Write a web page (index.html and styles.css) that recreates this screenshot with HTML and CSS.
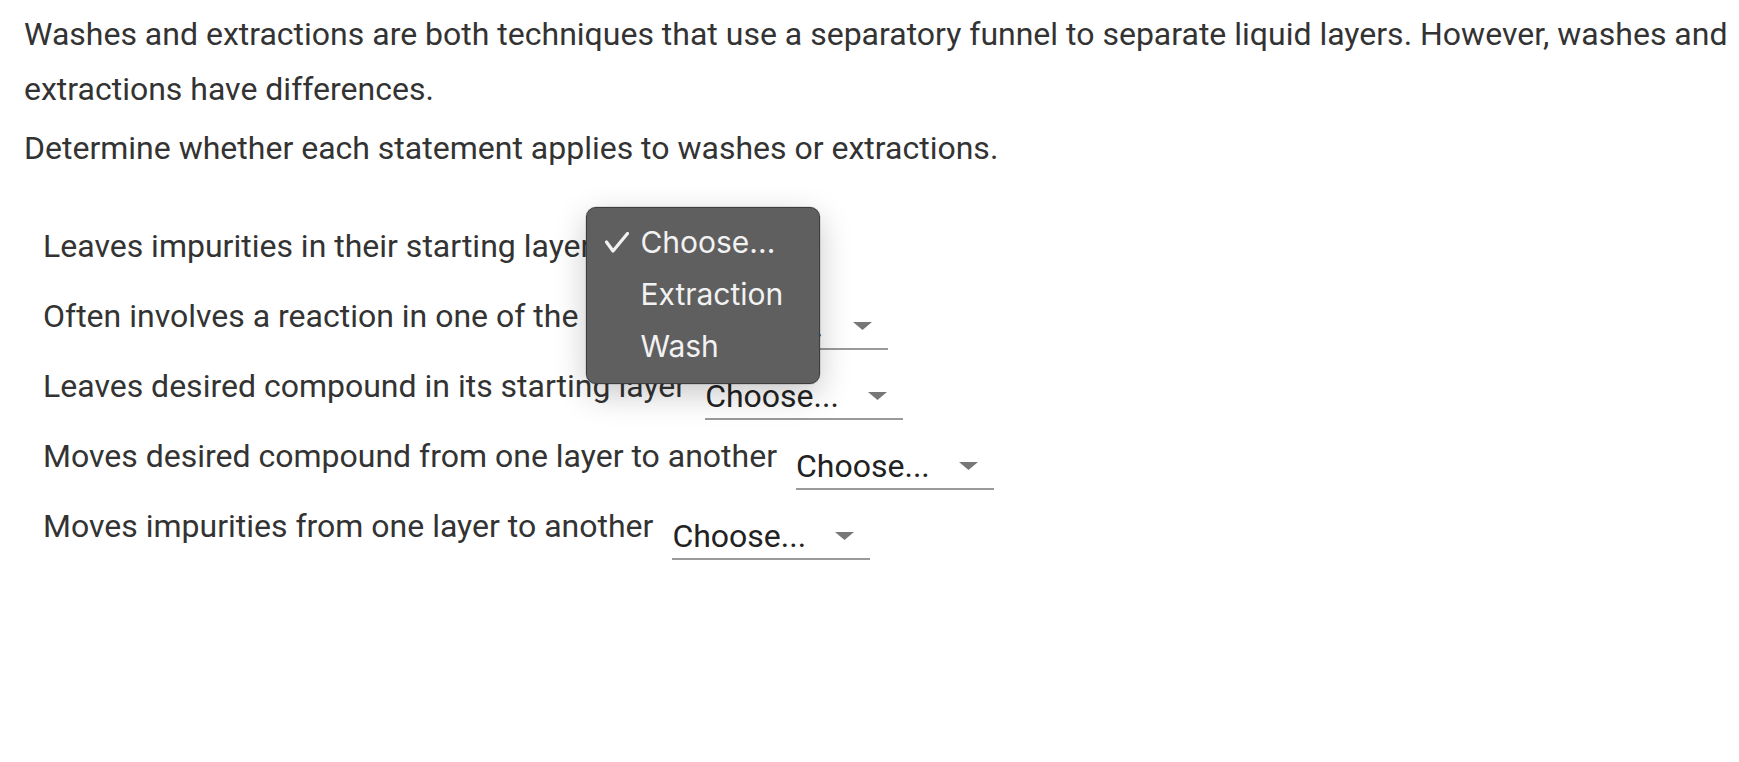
FILE: index.html
```html
<!DOCTYPE html>
<html lang="en">
<head>
<meta charset="utf-8">
<title>Washes and extractions</title>
<link rel="stylesheet" href="styles.css">
</head>
<body>
<div class="page">
  <p class="intro">Washes and extractions are both techniques that use a separatory funnel to separate liquid layers. However, washes and extractions have differences.</p>
  <p class="intro second">Determine whether each statement applies to washes or extractions.</p>
  <div class="rows">
    <div class="row">
      <span class="label">Leaves impurities in their starting layer</span>
      <div class="select open">
        <span class="value">Choose...</span>
        <svg class="caret" width="19" height="8" viewBox="0 0 19 8"><polygon points="0,0 19,0 9.5,8" fill="#777"/></svg>
        <div class="menu">
          <div class="item checked"><svg class="check" width="24" height="21" viewBox="0 0 24 21"><polyline points="1.5,10 8,19 22.5,1.5" fill="none" stroke="#f2f2f2" stroke-width="3.2" stroke-linecap="round" stroke-linejoin="round"/></svg><span>Choose...</span></div>
          <div class="item"><span>Extraction</span></div>
          <div class="item"><span>Wash</span></div>
        </div>
      </div>
    </div>
    <div class="row">
      <span class="label">Often involves a reaction in one of the layers</span>
      <div class="select">
        <span class="value">Choose...</span>
        <svg class="caret" width="19" height="8" viewBox="0 0 19 8"><polygon points="0,0 19,0 9.5,8" fill="#777"/></svg>
      </div>
    </div>
    <div class="row">
      <span class="label">Leaves desired compound in its starting layer</span>
      <div class="select">
        <span class="value">Choose...</span>
        <svg class="caret" width="19" height="8" viewBox="0 0 19 8"><polygon points="0,0 19,0 9.5,8" fill="#777"/></svg>
      </div>
    </div>
    <div class="row">
      <span class="label">Moves desired compound from one layer to another</span>
      <div class="select">
        <span class="value">Choose...</span>
        <svg class="caret" width="19" height="8" viewBox="0 0 19 8"><polygon points="0,0 19,0 9.5,8" fill="#777"/></svg>
      </div>
    </div>
    <div class="row">
      <span class="label">Moves impurities from one layer to another</span>
      <div class="select">
        <span class="value">Choose...</span>
        <svg class="caret" width="19" height="8" viewBox="0 0 19 8"><polygon points="0,0 19,0 9.5,8" fill="#777"/></svg>
      </div>
    </div>
  </div>
</div>
</body>
</html>
```

FILE: styles.css
```css
html, body {
  background: #ffffff;
}
body {
  margin: 0;
  font-family: Roboto, "Liberation Sans", sans-serif;
  color: #333333;
}
.page {
  padding: 7px 8px 0 24px;
}
.intro {
  margin: 0;
  font-size: 32px;
  line-height: 55px;
}
.intro.second {
  margin-top: 4px;
}
.rows {
  margin-top: 50px;
  padding-left: 19px;
  display: flex;
  flex-direction: column;
}
.row {
  display: flex;
  align-items: flex-start;
  height: 70px;
}
.label {
  font-size: 32px;
  line-height: 40px;
  white-space: nowrap;
}
.select {
  position: relative;
  margin-left: 19px;
  margin-top: 9px;
  display: flex;
  align-items: flex-start;
  width: 198px;
  height: 43px;
  border-bottom: 2px solid #9a9a9a;
  box-sizing: content-box;
}
.value {
  font-size: 32px;
  line-height: 40px;
  color: #222222;
  flex: 1;
  margin-top: 1px;
}
.caret {
  margin-right: 16px;
  margin-top: 17px;
}
.menu {
  position: absolute;
  left: -24px;
  top: -28px;
  width: 232px;
  padding: 8px 0 11px;
  background: #5f5f5f;
  border: 1px solid #3d3d3d;
  border-radius: 10px;
  box-shadow: 0 10px 32px rgba(0, 0, 0, 0.22), 0 0 0 0.5px rgba(0, 0, 0, 0.2);
  font-family: Inter, "Open Sans", sans-serif;
  font-size: 30px;
  line-height: 52px;
  color: #f2f2f2;
  z-index: 5;
}
.item {
  position: relative;
  padding-left: 53px;
  height: 52px;
  white-space: nowrap;
}
.check {
  position: absolute;
  left: 18px;
  top: 16px;
}
```
